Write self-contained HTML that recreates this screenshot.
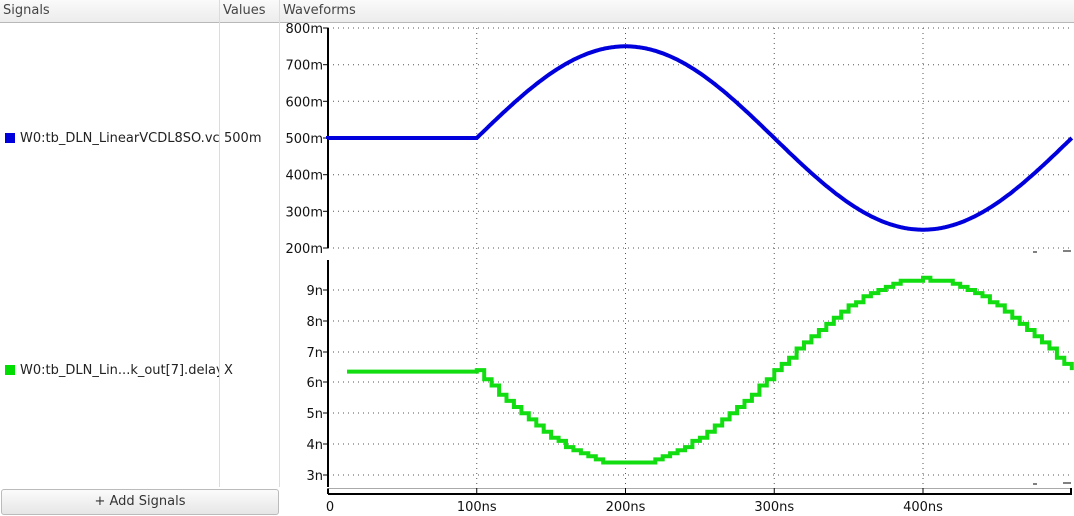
<!DOCTYPE html>
<html><head><meta charset="utf-8"><style>
body{margin:0;width:1074px;height:516px;overflow:hidden;background:#fff;font-family:"DejaVu Sans","Liberation Sans",sans-serif;font-size:13px;color:#222;position:relative}
.hdr{position:absolute;left:0;top:0;width:1074px;height:22px;background:linear-gradient(#fafafa,#ececec);border-bottom:1px solid #b8b8b8}
.hdr span{position:absolute;top:3px;color:#444}
.vl{position:absolute;top:0;width:1px;height:487px;background:#dcdcdc}
.sig{position:absolute;font-size:13px;color:#222;white-space:nowrap}
.sq{display:inline-block;width:10px;height:10px;margin-right:5px;vertical-align:-1px}
.btn{position:absolute;left:1px;top:489px;width:276px;height:24px;border:1px solid #bbb;border-radius:3px;background:linear-gradient(#fbfbfb,#e6e6e6);text-align:center;line-height:24px;color:#333}
svg{position:absolute;left:0;top:0}
</style></head><body>
<div class="hdr"><span style="left:3px">Signals</span><span style="left:223px">Values</span><span style="left:283px">Waveforms</span></div>
<div class="vl" style="left:219px;top:0"></div>
<div class="vl" style="left:279px;top:0"></div>
<div class="sig" style="left:5px;top:131px;width:214px;overflow:hidden"><span class="sq" style="background:#0000dd"></span>W0:tb_DLN_LinearVCDL8SO.vcd</div>
<div class="sig" style="left:224px;top:131px">500m</div>
<div class="sig" style="left:5px;top:363px;width:214px;overflow:hidden"><span class="sq" style="background:#00dd00"></span>W0:tb_DLN_Lin...k_out[7].delay</div>
<div class="sig" style="left:224px;top:363px">X</div>
<div class="btn">+ Add Signals</div>
<svg width="1074" height="516" id="s" font-family="DejaVu Sans, Liberation Sans, sans-serif" font-size="13"></svg>
<script>
var s=document.getElementById('s'),h='';
var X=function(t){return 328+t*1.4875};
var y1=[28,64.7,101.3,138,174.7,211.3,248],l1=['800m','700m','600m','500m','400m','300m','200m'];
for(var i=0;i<7;i++){h+='<line x1="328" y1="'+y1[i]+'" x2="1071" y2="'+y1[i]+'" stroke="#555" stroke-dasharray="1 4"/>';
h+='<line x1="323" y1="'+y1[i]+'" x2="328" y2="'+y1[i]+'" stroke="#000"/>';
h+='<text x="323" y="'+(y1[i]+5)+'" text-anchor="end" fill="#111">'+l1[i]+'</text>';}
var y2=[290,321,352,382,413,444,475],l2=['9n','8n','7n','6n','5n','4n','3n'];
for(i=0;i<7;i++){h+='<line x1="328" y1="'+y2[i]+'" x2="1071" y2="'+y2[i]+'" stroke="#555" stroke-dasharray="1 4"/>';
h+='<line x1="323" y1="'+y2[i]+'" x2="328" y2="'+y2[i]+'" stroke="#000"/>';
h+='<text x="323" y="'+(y2[i]+5)+'" text-anchor="end" fill="#111">'+l2[i]+'</text>';}
for(i=1;i<5;i++){var x=X(i*100);h+='<line x1="'+x+'" y1="28" x2="'+x+'" y2="494" stroke="#555" stroke-dasharray="1 4"/>';}
h+='<line x1="328" y1="28" x2="328" y2="248" stroke="#000" stroke-width="2"/>';
h+='<line x1="328" y1="260" x2="328" y2="494" stroke="#000" stroke-width="2"/>';
h+='<rect x="280" y="487" width="794" height="2" fill="#fff"/>';
h+='<line x1="328" y1="488.5" x2="1071" y2="488.5" stroke="#aaa"/>';
h+='<line x1="328" y1="494" x2="1071" y2="494" stroke="#000" stroke-width="2"/>';
h+='<line x1="1071" y1="488" x2="1071" y2="495" stroke="#000" stroke-width="2"/>';
var tl=['0','100ns','200ns','300ns','400ns'];
for(i=0;i<5;i++){var x=X(i*100);h+='<line x1="'+x+'" y1="488" x2="'+x+'" y2="494" stroke="#000"/>';h+='<text x="'+(i==0?x+2:x)+'" y="511" text-anchor="middle" fill="#111">'+tl[i]+'</text>';}
h+='<line x1="1033" y1="252" x2="1037" y2="252" stroke="#000"/><line x1="1063" y1="251" x2="1071" y2="251" stroke="#000"/>';
h+='<line x1="1033" y1="484" x2="1037" y2="484" stroke="#000"/><line x1="1063" y1="483" x2="1071" y2="483" stroke="#000"/>';
var p='M328 139';for(var t=0;t<=500;t+=1){var v=t<100?0.5:0.5+0.25*Math.sin(2*Math.PI*(t-100)/400);p+=' L'+X(t).toFixed(1)+' '+(28+(0.8-v)*366.7).toFixed(1);}
h+='<path d="'+p+'" fill="none" stroke="#0000dd" stroke-width="4"/>';
var yg=function(v){return 290+(9-v)*30.8;};
p='M347 '+yg(6.35).toFixed(1)+' L'+X(100).toFixed(1)+' '+yg(6.35).toFixed(1);var prev=6.35;
for(t=100;t<=500;t+=5){var v=6.35-3*Math.sin(2*Math.PI*(t-100)/400);v=Math.round(v*10)/10;p+=' L'+X(t).toFixed(1)+' '+yg(prev).toFixed(1)+' L'+X(t).toFixed(1)+' '+yg(v).toFixed(1);prev=v;}
h+='<path d="'+p+'" fill="none" stroke="#11dd11" stroke-width="4"/>';
s.innerHTML=h;
</script>
</body></html>
